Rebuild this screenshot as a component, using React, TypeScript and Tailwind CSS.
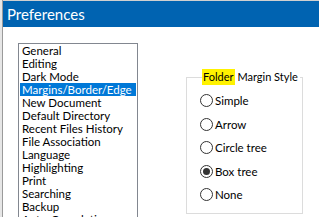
import React from 'react';

const pages = [
  'General',
  'Editing',
  'Dark Mode',
  'Margins/Border/Edge',
  'New Document',
  'Default Directory',
  'Recent Files History',
  'File Association',
  'Language',
  'Highlighting',
  'Print',
  'Searching',
  'Backup',
  'Auto-Completion',
];

const styles = ['Simple', 'Arrow', 'Circle tree', 'Box tree', 'None'];

function Radio({ label, checked }: { label: string; checked?: boolean }) {
  return (
    <div className="flex items-center h-[13px] overflow-visible">
      <span className="w-[13px] h-[13px] shrink-0 rounded-full border border-[#333] bg-white flex items-center justify-center">
        {checked && <span className="w-[7px] h-[7px] rounded-full bg-[#333]"></span>}
      </span>
      <span className="ml-[2px] text-[11.5px] leading-[13px] text-black whitespace-nowrap">{label}</span>
    </div>
  );
}

export default function App() {
  const selected = 'Margins/Border/Edge';

  return (
    <div className="w-[319px] h-[217px] overflow-hidden bg-white flex font-['Lato','Liberation_Sans',sans-serif]">
      {/* window behind */}
      <div className="w-[3px] h-full bg-[#e6e6e6] border-r border-[#9a9a9a]"></div>

      <div className="flex-1 flex flex-col">
        <div className="h-[1px] bg-[#d0d0d0]"></div>
        <div className="h-[26px] bg-[#0063b1] flex items-center pl-[4px] text-white text-[15px]">
          Preferences
        </div>

        <div className="flex-1 flex pl-[15px] pt-[16px] min-h-0">
          {/* page list */}
          <div className="w-[120px] h-[200px] shrink-0 border border-[#828790] px-[1px] overflow-hidden">
            {pages.map((p) => (
              <div
                key={p}
                className={`h-[13px] leading-[13px] text-[11.5px] pl-[2px] whitespace-nowrap overflow-hidden ${
                  p === selected ? 'bg-[#0078d7] text-white' : 'text-black'
                }`}
              >
                {p}
              </div>
            ))}
          </div>

          {/* folder margin style */}
          <fieldset className="ml-[48px] mt-[26px] w-[117px] max-w-[117px] min-w-0 h-[145px] shrink-0 border border-[#dcdcdc] pl-[13px] pb-[6px]">
            <legend className="ml-[2px] pr-[2px] text-[11px] leading-[16px] text-black whitespace-nowrap">
              <span className="inline-block bg-[#fff200] px-[1px] leading-[16px]">Folder</span> Margin Style
            </legend>
            <div className="flex flex-col gap-[10.5px] mt-[9px]">
              {styles.map((s) => (
                <Radio key={s} label={s} checked={s === 'Box tree'} />
              ))}
            </div>
          </fieldset>
        </div>
      </div>
    </div>
  );
}
